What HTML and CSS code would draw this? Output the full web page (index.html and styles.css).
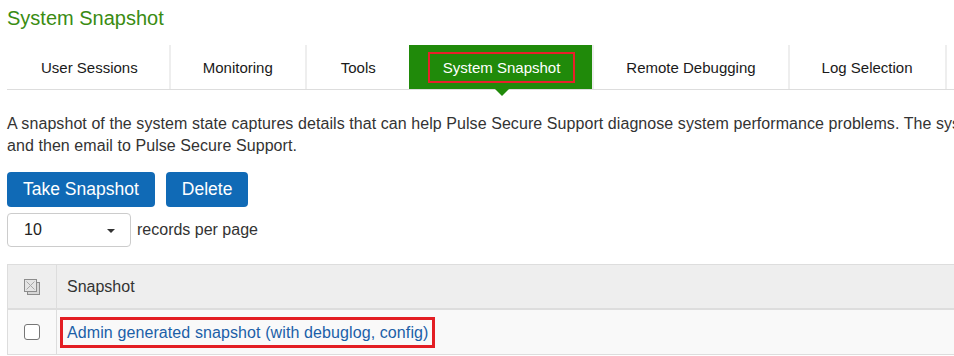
FILE: index.html
```html
<!DOCTYPE html>
<html lang="en">
<head>
<meta charset="utf-8">
<title>System Snapshot</title>
<link rel="stylesheet" href="styles.css">
</head>
<body>
<div class="page">
  <h1 class="title">System Snapshot</h1>
  <nav class="tabs">
    <a class="tab">User Sessions</a>
    <a class="tab">Monitoring</a>
    <a class="tab wide">Tools</a>
    <a class="tab active"><span class="mark">System Snapshot</span></a>
    <a class="tab">Remote Debugging</a>
    <a class="tab last">Log Selection</a>
  </nav>
  <p class="intro">A snapshot of the system state captures details that can help Pulse Secure Support diagnose system performance problems. The system snapshot can be saved to your local computer<br>and then email to Pulse Secure Support.</p>
  <div class="actions">
    <button class="btn">Take Snapshot</button>
    <button class="btn">Delete</button>
  </div>
  <div class="pager">
    <div class="select"><span>10</span><span class="caret"></span></div>
    <span class="pager-label">records per page</span>
  </div>
  <div class="table">
    <div class="row head">
      <div class="cell check">
        <svg width="16" height="16" viewBox="0 0 16 16" aria-hidden="true">
          <rect x="3.5" y="3.5" width="12" height="12" fill="#d6d6d6" stroke="#8c8c8c"/>
          <rect x="0.5" y="0.5" width="12" height="12" fill="#e4e4e4" stroke="#8c8c8c"/>
          <path d="M2.5 2.5 L10.5 10.5 M10.5 2.5 L2.5 10.5" stroke="#a8a8a8" stroke-width="1"/>
        </svg>
      </div>
      <div class="cell name">Snapshot</div>
    </div>
    <div class="row body">
      <div class="cell check"><span class="box"></span></div>
      <div class="cell name"><span class="mark2"><a class="link">Admin generated snapshot (with debuglog, config)</a></span></div>
    </div>
  </div>
</div>
</body>
</html>
```

FILE: styles.css
```css
html, body {
  margin: 0;
  background: #fff;
  overflow: hidden;
}
body {
  font-family: "Liberation Sans", Arial, sans-serif;
  color: #333;
}
.page {
  width: 1300px;
  padding: 6px 0 0 7px;
}
.title {
  margin: 0;
  font-size: 20px;
  line-height: 24px;
  font-weight: normal;
  color: #3a8c12;
}
.tabs {
  margin-top: 15px;
  display: flex;
  border-bottom: 1px solid #ddd;
}
.tab {
  position: relative;
  height: 44px;
  display: flex;
  align-items: center;
  padding: 0 32px;
  border-left: 2px solid #eee;
  font-size: 15px;
  color: #1a1a1a;
  white-space: nowrap;
}
.tab.wide {
  padding: 0 33px 0 34px;
}
.tab:first-child {
  border-left-color: transparent;
  padding-right: 31px;
}
.tab.last {
  border-right: 2px solid #eee;
}
.tab.active {
  background: #208a0a;
  border-left-color: #208a0a;
  color: #fff;
}
.tab.active::after {
  content: "";
  position: absolute;
  top: 100%;
  left: 50%;
  margin-left: -7px;
  border-left: 7px solid transparent;
  border-right: 7px solid transparent;
  border-top: 7px solid #208a0a;
}
.mark {
  display: inline-block;
  margin: 0 -15px;
  padding: 4px 13px;
  border: 2px solid #e8202a;
  line-height: 19px;
}
.intro {
  margin: 23px 0 0;
  font-size: 16px;
  line-height: 22px;
  letter-spacing: 0.07px;
  white-space: nowrap;
}
.actions {
  margin-top: 15px;
  display: flex;
  gap: 11px;
}
.btn {
  height: 35px;
  padding: 0 16px;
  border: 0;
  border-radius: 4px;
  background: #106ab6;
  color: #fff;
  font-family: inherit;
  font-size: 17.5px;
}
.pager {
  margin-top: 6px;
  display: flex;
  align-items: center;
  gap: 6px;
}
.select {
  box-sizing: border-box;
  width: 124px;
  height: 34px;
  border: 1px solid #ccc;
  border-radius: 4px;
  display: flex;
  align-items: center;
  justify-content: space-between;
  padding: 0 15px 0 16px;
  font-size: 16px;
  color: #222;
}
.caret {
  width: 0;
  height: 0;
  border-left: 4px solid transparent;
  border-right: 4px solid transparent;
  border-top: 4px solid #333;
  margin-top: 2px;
}
.pager-label {
  font-size: 16px;
}
.table {
  margin-top: 17px;
  border-top: 1px solid #ddd;
  border-left: 1px solid #ddd;
}
.row {
  display: grid;
  grid-template-columns: 49px 1fr;
}
.row.head {
  height: 43px;
  background: #eee;
  border-bottom: 2px solid #ddd;
}
.row.body {
  height: 44px;
  background: #f9f9f9;
  border-bottom: 1px solid #ddd;
}
.cell {
  display: flex;
  align-items: center;
  font-size: 16px;
}
.cell.check {
  justify-content: center;
  border-right: 1px solid #ddd;
}
.cell.name {
  padding-left: 10px;
}
.box {
  box-sizing: border-box;
  width: 16px;
  height: 16px;
  border: 1px solid #767676;
  border-radius: 3px;
  background: #fff;
}
.mark2 {
  display: inline-block;
  margin-left: -7px;
  padding: 2px 4px;
  border: 3px solid #e31e24;
  line-height: 21px;
}
.link {
  color: #1b5fa8;
  text-decoration: none;
  letter-spacing: 0.1px;
}
```
